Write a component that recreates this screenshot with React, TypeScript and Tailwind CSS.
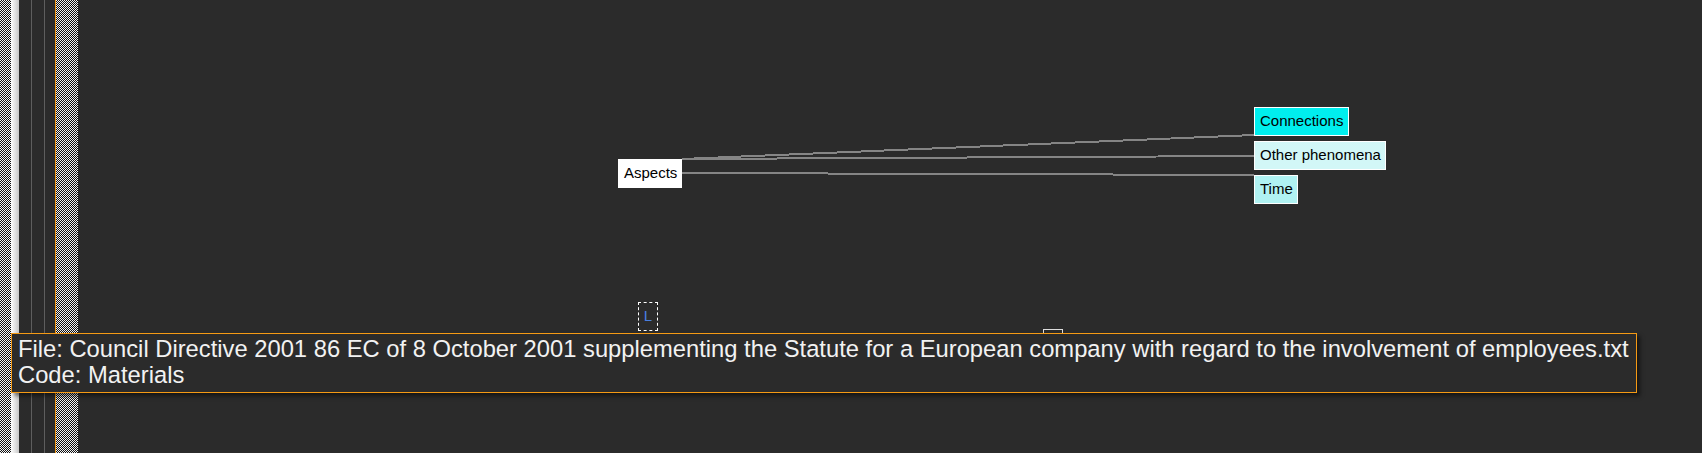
import React from "react";

const checker =
  "bg-[repeating-conic-gradient(#111_0%_25%,#f4f4f4_0%_50%)] bg-[length:2px_2px]";

type Node = { label: string; x: number; y: number; w: number; cls: string };

const nodes: Node[] = [
  { label: "Aspects", x: 540, y: 159, w: 64, cls: "bg-white border-white" },
  { label: "Connections", x: 1176, y: 107, w: 95, cls: "bg-[#00eeee] border-white" },
  { label: "Other phenomena", x: 1176, y: 141, w: 132, cls: "bg-[#d2f7f7] border-white" },
  { label: "Time", x: 1176, y: 175, w: 44, cls: "bg-[#b0f2f2] border-white" },
];

const edges = [
  { x1: 604, y1: 159, x2: 1176, y2: 135 },
  { x1: 604, y1: 159, x2: 1176, y2: 156 },
  { x1: 604, y1: 173, x2: 1176, y2: 175 },
];

const SideStrip = () => (
  <div className="flex h-full shrink-0">
    <div className={`w-[11px] h-full ${checker}`} />
    <div className="w-[8px] h-full bg-gradient-to-r from-white to-[#c8c8c8]" />
    <div className="w-[12px] h-full bg-[#2b2b2b]" />
    <div className="w-px h-full bg-[#5e5e5e]" />
    <div className="w-[12px] h-full bg-[#2b2b2b]" />
    <div className="w-px h-full bg-[#5e5e5e]" />
    <div className="w-[10px] h-full bg-[#2b2b2b]" />
    <div className="w-px h-full bg-[#f0960f]" />
    <div className={`w-[22px] h-full ${checker}`} />
  </div>
);

const App = () => {
  return (
    <div
      className="relative flex w-full h-screen overflow-hidden bg-[#2b2b2b]"
      style={{ fontFamily: "'Liberation Sans', Arial, sans-serif" }}
    >
      <SideStrip />

      <div className="relative flex-1 h-full">
        <svg className="absolute inset-0 w-full h-full" shapeRendering="crispEdges">
          {edges.map((e, i) => (
            <line key={i} x1={e.x1} y1={e.y1} x2={e.x2} y2={e.y2} stroke="#858585" strokeWidth={2} />
          ))}
        </svg>

        {nodes.map((n) => (
          <div
            key={n.label}
            className={`absolute h-[29px] flex items-center px-[5px] border text-[15px] text-black whitespace-nowrap ${n.cls}`}
            style={{ left: n.x, top: n.y, width: n.w }}
          >
            {n.label}
          </div>
        ))}

        <div className="absolute left-[560px] top-[302px] w-[20px] h-[29px] border border-dashed border-white flex items-center justify-center text-[15px] text-[#4a80e0]">
          L
        </div>

        <div className="absolute left-[965px] top-[329px] w-[20px] h-[20px] border border-[#dddddd]" />
      </div>

      <div className="absolute left-[11px] top-[333px] w-[1626px] h-[60px] border border-[#f59a14] bg-[#2b2b2b] pl-[6px] pt-[2px] text-[23.75px] leading-[26px] text-[#f2f2f2] shadow-[3px_3px_4px_rgba(0,0,0,0.5)] whitespace-nowrap">
        <div>
          File: Council Directive 2001 86 EC of 8 October 2001 supplementing the Statute for a European company with regard to the involvement of employees.txt
        </div>
        <div>Code: Materials</div>
      </div>
    </div>
  );
};

export default App;
